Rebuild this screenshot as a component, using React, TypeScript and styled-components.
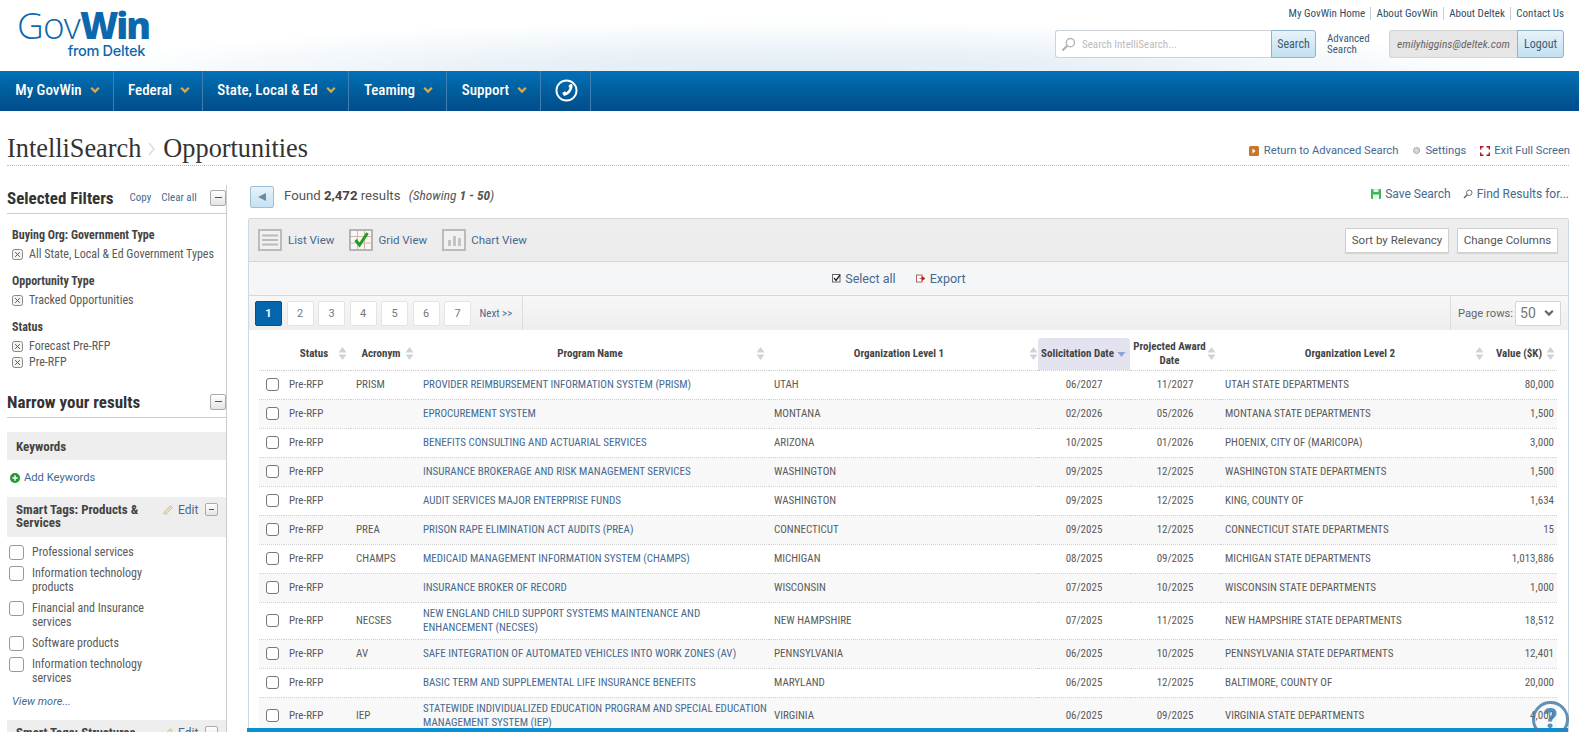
import React from "react";
import styled, { createGlobalStyle } from "styled-components";

const Global = createGlobalStyle`
  html, body { margin: 0; padding: 0; background: #fff; }
  body { font-family: Roboto, "Liberation Sans", sans-serif; color: #555; font-size: 12px; }
  #root { width: 1579px; height: 732px; overflow: hidden; position: relative; }
  * { box-sizing: border-box; }
`;

const narrow = `font-stretch: 75%;`;
const LINK = "#46698f";

/* ---------- header ---------- */
const Header = styled.header`
  height: 71px;
  display: flex;
  justify-content: space-between;
  background: radial-gradient(ellipse 760px 62px at 800px 82px, #dce9f3 0%, #eaf2f8 50%, #fff 100%);
`;
const Logo = styled.div`
  margin: 6px 0 0 17px;
  width: 128px;
  color: #0c67ad;
  font-family: "Open Sans", sans-serif;
  text-align: right;
  line-height: 1;
`;
const LogoMain = styled.div`
  font-size: 37px;
  letter-spacing: -0.8px;
  font-weight: 300;
  line-height: 38px;
  white-space: nowrap;
  b { font-weight: 800; letter-spacing: -2.2px; margin-right: 1px; }
`;
const LogoSub = styled.div`
  font-family: Inter, sans-serif;
  font-weight: 500;
  font-size: 14.5px;
  letter-spacing: -0.3px;
  line-height: 14px;
`;
const HeaderRight = styled.div`
  display: flex;
  flex-direction: column;
  align-items: flex-end;
  padding: 7px 15px 0 0;
`;
const TopLinks = styled.nav`
  display: flex;
  height: 13px;
  line-height: 13px;
  align-items: center;
  font-size: 11px;
  color: #2f4f68;
  ${narrow}
`;
const TopLink = styled.a`
  padding: 0 5.2px;
  border-left: 1px solid #c6ced6;
  &:first-child { border-left: 0; }
  &:last-child { padding-right: 0; }
`;
const SearchRow = styled.div`
  display: flex;
  align-items: stretch;
  height: 28px;
  margin-top: 10px;
`;
const SearchBox = styled.div`
  width: 216px;
  display: flex;
  align-items: center;
  gap: 6px;
  padding-left: 5px;
  background: #fff;
  border: 1px solid #cdd3d9;
  border-right: 0;
  border-radius: 3px 0 0 3px;
  color: #bbb;
  font-size: 11px;
  ${narrow}
`;
const LightBlueBtn = styled.button<{ $w: number }>`
  width: ${(p) => p.$w}px;
  padding: 0;
  background: linear-gradient(#e6f3fb, #c3e0f1);
  border: 1px solid #8fb4cc;
  border-radius: 0 3px 3px 0;
  color: #3c5a72;
  font-family: inherit;
  ${narrow}
  font-size: 12px;
`;
const AdvSearch = styled.div`
  width: 62px;
  margin-left: 11px;
  font-size: 11px;
  line-height: 11.5px;
  color: #3a5a78;
  ${narrow}
  align-self: center;
`;
const EmailBox = styled.div`
  width: 128px;
  display: flex;
  align-items: center;
  justify-content: center;
  background: #e6e6e6;
  border: 1px solid #d5d5d5;
  border-right: 0;
  border-radius: 3px 0 0 3px;
  font-size: 11.5px;
  font-style: italic;
  color: #666;
  ${narrow}
`;

/* ---------- nav ---------- */
const NavBar = styled.nav`
  height: 40px;
  display: flex;
  background: linear-gradient(#0270b8 0%, #01609f 45%, #024c8b 100%);
`;
const NavItem = styled.div<{ $w: number }>`
  width: ${(p) => p.$w}px;
  display: flex;
  align-items: center;
  justify-content: center;
  gap: 8px;
  border-right: 1px solid #3f80b4;
  color: #fff;
  font-size: 15px;
  font-weight: 500;
  ${narrow}
  padding: 0 0 2px 2px;
`;

/* ---------- title ---------- */
const TitleRow = styled.div`
  height: 55px;
  margin: 0 10px 0 7px;
  border-bottom: 1px dotted #bbb;
  display: flex;
  justify-content: space-between;
  align-items: flex-end;
`;
const Crumbs = styled.div`
  display: flex;
  align-items: center;
  font-family: "Liberation Serif", serif;
  font-size: 26.3px;
  line-height: 32px;
  color: #333;
  gap: 7px;
`;
const TitleActions = styled.div`
  display: flex;
  align-items: center;
  font-size: 11.2px;
  color: ${LINK};
  height: 24px;
  padding-bottom: 5px;
  margin-right: -1px;
`;
const ActionLink = styled.a<{ $ml?: number; $gap?: number }>`
  display: flex;
  align-items: center;
  gap: ${(p) => p.$gap ?? 5}px;
  margin-left: ${(p) => p.$ml ?? 0}px;
  color: ${LINK};
  white-space: nowrap;
`;

/* ---------- content ---------- */
const Content = styled.div`
  display: flex;
  padding: 19px 0 0 7px;
`;
const Sidebar = styled.aside`
  width: 220px;
  height: 560px;
  border-right: 1px solid #c9ccd0;
  flex: none;
`;
const SideHead = styled.div<{ $mt?: number }>`
  height: 29px;
  margin-top: ${(p) => p.$mt ?? 0}px;
  display: flex;
  align-items: center;
  border-bottom: 1px solid #ccc;
  padding-bottom: 3px;
  h2 {
    margin: 0;
    font-size: 17px;
    line-height: 20px;
    font-weight: 700;
    color: #333;
    ${narrow}
  }
`;
const SideTool = styled.a<{ $ml: number }>`
  margin-left: ${(p) => p.$ml}px;
  color: ${LINK};
  font-size: 11px;
  ${narrow}
`;
const Minus = styled.span<{ $size?: number }>`
  width: ${(p) => p.$size ?? 16}px;
  height: ${(p) => p.$size ?? 16}px;
  flex: none;
  margin-left: auto;
  border: 1px solid #aaa;
  border-radius: 2px;
  background: linear-gradient(#fff, #e4e4e4);
  position: relative;
  &::after {
    content: "";
    position: absolute;
    left: 25%;
    right: 25%;
    top: 50%;
    margin-top: -1px;
    height: 1px;
    background: #555;
  }
`;
const FilterGroup = styled.div`
  padding: 13px 0 0 5px;
`;
const FilterLabel = styled.div<{ $mt?: number }>`
  font-size: 12px;
  line-height: 16px;
  font-weight: 700;
  color: #444;
  ${narrow}
  margin: ${(p) => p.$mt ?? 0}px 0 3px;
`;
const Chip = styled.div`
  display: flex;
  align-items: center;
  gap: 6px;
  height: 16px;
  font-size: 12px;
  color: #5a5a5a;
  ${narrow}
  white-space: nowrap;
`;
const SectionBar = styled.div<{ $mt?: number }>`
  background: #eee;
  height: 28px;
  margin-top: ${(p) => p.$mt ?? 0}px;
  padding-left: 9px;
  display: flex;
  align-items: center;
  font-size: 13px;
  font-weight: 700;
  color: #444;
  ${narrow}
`;
const AddRow = styled.a`
  height: 37px;
  display: flex;
  align-items: center;
  gap: 4px;
  padding: 0 0 2px 3px;
  color: ${LINK};
  font-size: 11.2px;
`;
const TagHead = styled.div<{ $h: number }>`
  min-height: ${(p) => p.$h}px;
  background: #eee;
  padding: 6px 8px 0 9px;
  display: flex;
  align-items: flex-start;
  div.title {
    width: 135px;
    font-size: 13px;
    line-height: 13px;
    font-weight: 700;
    color: #444;
    ${narrow}
  }
`;
const EditLink = styled.span`
  display: flex;
  align-items: center;
  gap: 4px;
  margin-left: 12px;
  font-size: 12px;
  color: ${LINK};
  height: 13px;
`;
const TagList = styled.ul`
  list-style: none;
  margin: 8px 0 0;
  padding: 0 0 0 2px;
`;
const TagItem = styled.li`
  display: flex;
  gap: 8px;
  margin-bottom: 7px;
  font-size: 12px;
  line-height: 14px;
  color: #5a5a5a;
  ${narrow}
  span { width: 125px; }
`;
const Check = styled.span`
  display: block;
  flex: none;
  width: 15px !important;
  height: 15px;
  margin-bottom: -1px;
  border: 1px solid #999;
  border-radius: 3px;
  background: #fff;
`;
const ViewMore = styled.a`
  display: block;
  margin: 10px 0 11px 5px;
  font-size: 11px;
  line-height: 14px;
  font-style: italic;
  color: ${LINK};
`;

/* ---------- main ---------- */
const Main = styled.main`
  margin-left: 21px;
  width: 1321px;
  flex: none;
`;
const ResultHead = styled.div`
  height: 33px;
  padding: 0 0 0 2px;
  display: flex;
  align-items: flex-start;
`;
const BackBtn = styled.span`
  width: 24px;
  height: 22px;
  border: 1px solid #9fc0d6;
  border-radius: 2px;
  background: linear-gradient(#e6f3fb, #c6e1f1);
  display: flex;
  align-items: center;
  justify-content: center;
  margin-top: 1px;
`;
const Found = styled.div`
  margin-left: 10px;
  font-size: 13.2px;
  line-height: 22px;
  color: #555;
  b { color: #444; }
  em { margin-left: 5px; font-size: 13.4px; ${narrow} b { color: #555; } }
`;
const HeadActions = styled.div`
  margin-left: auto;
  display: flex;
  gap: 12px;
  color: ${LINK};
  font-size: 12px;
  height: 18px;
  align-items: center;
`;
const Panel = styled.section`
  height: 520px;
  border: 1px solid #cdd9e4;
  border-top: 0;
  border-radius: 3px 3px 0 0;
`;
const ViewBar = styled.div`
  height: 44px;
  background: linear-gradient(#eee, #ececec);
  border-bottom: 1px solid #d6d6d6;
  border-top: 1px solid #d6d6d6;
  display: flex;
  align-items: center;
  padding: 0 10px 0 9px;
`;
const ViewLink = styled.a<{ $ml?: number; $gap: number }>`
  display: flex;
  align-items: center;
  gap: ${(p) => p.$gap}px;
  margin-left: ${(p) => p.$ml ?? 0}px;
  color: ${LINK};
  font-size: 11.5px;
  white-space: nowrap;
`;
const WhiteBtn = styled.button<{ $w: number; $ml: string }>`
  width: ${(p) => p.$w}px;
  height: 25px;
  margin-left: ${(p) => p.$ml};
  background: #fff;
  border: 1px solid #d0d0d0;
  border-radius: 1px;
  box-shadow: 0 1px 1px rgba(0, 0, 0, 0.12);
  font-family: inherit;
  font-size: 11.5px;
  color: #555;
  padding: 0;
`;
const SelectRow = styled.div`
  height: 34px;
  background: #f5f6f7;
  border-bottom: 1px solid #d8d8d8;
  display: flex;
  align-items: center;
  justify-content: center;
  gap: 20px;
  font-size: 12.5px;
  color: ${LINK};
  padding-right: 19px;
  a { display: flex; align-items: center; gap: 4px; }
`;
const PagerRow = styled.div`
  height: 34px;
  background: linear-gradient(#f7f7f7, #eeeeee);
  display: flex;
  align-items: stretch;
`;
const Pages = styled.div`
  display: flex;
  align-items: center;
  gap: 4.5px;
  padding-left: 6px;
  width: 274px;
  border-right: 1px solid #ddd;
`;
const PageBtn = styled.span<{ $on?: boolean }>`
  width: 27px;
  height: 25px;
  display: flex;
  align-items: center;
  justify-content: center;
  border-radius: 2px;
  border: 1px solid ${(p) => (p.$on ? "#02508f" : "#e4e4e4")};
  background: ${(p) => (p.$on ? "#0566ad" : "#fff")};
  color: ${(p) => (p.$on ? "#fff" : "#777")};
  font-size: 11px;
  font-weight: ${(p) => (p.$on ? 700 : 400)};
`;
const NextLink = styled.a`
  margin-left: 4px;
  color: ${LINK};
  font-size: 11px;
  ${narrow}
  white-space: nowrap;
`;
const Rows = styled.div`
  margin-left: auto;
  width: 118px;
  border-left: 1px solid #ddd;
  display: flex;
  align-items: center;
  gap: 2px;
  padding-left: 7px;
  font-size: 11.2px;
  color: #666;
  white-space: nowrap;
`;
const RowSelect = styled.div`
  width: 46px;
  height: 25px;
  background: #fff;
  border: 1px solid #d4d4d4;
  border-radius: 2px;
  display: flex;
  align-items: center;
  justify-content: space-between;
  padding: 0 6px 0 4px;
  font-size: 14px;
  color: #777;
`;
const TableWrap = styled.div`
  padding: 0 11px 0 10px;
  background: #fff;
`;
const Table = styled.table`
  border-collapse: collapse;
  table-layout: fixed;
  width: 1298px;
`;
const Th = styled.th`
  height: 40px;
  padding: 0;
  border-bottom: 1px dotted #ccc;
  vertical-align: bottom;
  font-size: 11px;
  line-height: 13.5px;
  font-weight: 700;
  color: #444;
  ${narrow}
`;
const ThInner = styled.div<{ $active?: boolean; $pl?: number; $pr?: number }>`
  height: 32px;
  display: flex;
  align-items: center;
  border-radius: 3px 3px 0 0;
  background: ${(p) => (p.$active ? "#e3e3f0" : "transparent")};
  padding: 0 ${(p) => p.$pr ?? 4}px 0 ${(p) => p.$pl ?? 0}px;
  span.t { flex: 1; text-align: center; }
`;
const Tr = styled.tr<{ $alt: boolean; $h: number }>`
  height: ${(p) => p.$h}px;
  background: ${(p) => (p.$alt ? "#f8f8f8" : "#fff")};
`;
const Td = styled.td<{ $align?: string; $pl?: number; $pr?: number }>`
  padding: 0 ${(p) => p.$pr ?? 0}px 0 ${(p) => p.$pl ?? 5}px;
  border-bottom: 1px dotted #d0d0d0;
  font-size: 11px;
  line-height: 14px;
  text-align: ${(p) => p.$align ?? "left"};
  color: #5a5a5a;
  ${narrow}
`;
const RowCheck = styled.span`
  display: block;
  width: 13px;
  height: 13px;
  margin-left: 7px;
  border: 1px solid #777;
  border-radius: 3px;
  background: #fff;
`;
const ProgLink = styled.a`
  color: ${LINK};
`;
const BottomStrip = styled.div`
  position: absolute;
  left: 247px;
  right: 11px;
  bottom: 0;
  height: 4px;
  background: #0a90d2;
`;
const HelpBubble = styled.div`
  position: absolute;
  left: 1532px;
  top: 701px;
  width: 37px;
  height: 37px;
  border-radius: 50%;
  border: 3px solid rgba(70, 125, 170, 0.85);
  color: rgba(70, 125, 170, 0.9);
  font-size: 27px;
  font-weight: 900;
  line-height: 31px;
  text-align: center;
`;

/* ---------- icons ---------- */
const Chevron = ({ c = "#e0a94a" }: { c?: string }) => (
  <svg width="10" height="8" viewBox="0 0 10 8"><path d="M1.2 1.8 5 5.6l3.8-3.8" fill="none" stroke={c} strokeWidth="2.2" /></svg>
);
const PhoneIcon = () => (
  <svg width="23" height="23" viewBox="0 0 22 22">
    <circle cx="11" cy="11" r="9.6" fill="none" stroke="#fff" strokeWidth="1.8" />
    <path d="M13.7 5.6 15.4 4.8c.5-.2.9-.1 1.1.3.7 1.8.2 4.3-1.3 6.6-1.6 2.4-3.9 4-6 4.4-.5.1-.9-.1-1.1-.5l-.9-1.7c-.2-.4 0-.9.4-1.1l1.5-.8c.4-.2.8-.1 1 .2l.5.6c1.5-.8 3-2.9 3.4-4.6l-.7-.4c-.4-.2-.5-.7-.3-1.1l.7-1.1z" fill="#fff" />
  </svg>
);
const SearchIcon = ({ s = 15, c = "#b5b5b5" }: { s?: number; c?: string }) => (
  <svg width={s} height={s} viewBox="0 0 16 16"><circle cx="10" cy="6" r="4.4" fill="none" stroke={c} strokeWidth="1.5" /><path d="M6.8 9.2 1.6 14.4" stroke={c} strokeWidth="2.4" /></svg>
);
const ReturnIcon = () => (
  <svg width="10" height="10" viewBox="0 0 10 10"><rect width="10" height="10" rx="1.5" fill="#c9752a" /><path d="M3.5 2.5 6.5 5l-3 2.5z" fill="#fff" /></svg>
);
const GearIcon = () => (
  <svg width="9" height="9" viewBox="0 0 10 10"><circle cx="5" cy="5" r="3.3" fill="#ddd" stroke="#999" strokeWidth="1.2" strokeDasharray="1.4 .6" /><circle cx="5" cy="5" r="1.2" fill="#fff" stroke="#aaa" strokeWidth=".6" /></svg>
);
const ExitIcon = () => (
  <svg width="10" height="10" viewBox="0 0 10 10"><path d="M.7 3.5V.7h2.8M6.5.7h2.8v2.8M9.3 6.5v2.8H6.5M3.5 9.3H.7V6.5" fill="none" stroke="#a8181e" strokeWidth="1.4" /></svg>
);
const XBox = () => (
  <svg width="11" height="11" viewBox="0 0 11 11"><rect x=".5" y=".5" width="10" height="10" rx="2" fill="#f3f3f3" stroke="#888" /><path d="m3.2 3.2 4.6 4.6m0-4.6L3.2 7.8" stroke="#555" strokeWidth="1" /></svg>
);
const PlusIcon = () => (
  <svg width="10" height="10" viewBox="0 0 10 10"><circle cx="5" cy="5" r="5" fill="#1a9a2f" /><path d="M5 2.3v5.4M2.3 5h5.4" stroke="#fff" strokeWidth="1.5" /></svg>
);
const Pencil = () => (
  <svg width="11" height="11" viewBox="0 0 11 11"><path d="M1 8 7.5 1.5l2 2L3 10H1z" fill="#e9dcb0" stroke="#cdbb80" strokeWidth=".7" /><path d="M.5 10.6h6" stroke="#ddd" /></svg>
);
const SaveIcon = () => (
  <svg width="10" height="10" viewBox="0 0 10 10"><rect width="10" height="10" rx="1" fill="#3eb45b" /><rect x="2.5" y="0" width="5" height="3" fill="#d7f2dd" /><rect x="2" y="5.5" width="6" height="4.5" fill="#e9f8ec" /></svg>
);
const ListIcon = () => (
  <svg width="24" height="22" viewBox="0 0 24 22"><rect x="1" y="1" width="22" height="20" fill="#f1f1f1" stroke="#bbb" strokeWidth="2" /><path d="M4 6.5h16M4 11h16M4 15.5h16" stroke="#bbb" strokeWidth="2" /></svg>
);
const GridIcon = () => (
  <svg width="24" height="22" viewBox="0 0 24 22"><rect x="1" y="1" width="22" height="20" fill="#f7f7f7" stroke="#b5b5b5" strokeWidth="2" /><path d="M2 7.5h20M2 14h20M8.5 2v18M15.5 2v18" stroke="#d8b4a8" strokeWidth="1" /><path d="m6.5 11 4 5 8-12" fill="none" stroke="#1ea01e" strokeWidth="3" /></svg>
);
const ChartIcon = () => (
  <svg width="24" height="22" viewBox="0 0 24 22"><rect x="1" y="1" width="22" height="20" fill="#f1f1f1" stroke="#bbb" strokeWidth="2" /><path d="M6 11h3v6H6zM11 7h3v10h-3zM16 9h3v8h-3z" fill="#c4c4c4" /></svg>
);
const SelectIcon = () => (
  <svg width="9" height="9" viewBox="0 0 9 9"><rect x=".5" y=".5" width="7.5" height="7.5" fill="#fff" stroke="#666" /><path d="m2 4 2 2.5L8 1" fill="none" stroke="#222" strokeWidth="1.3" /></svg>
);
const ExportIcon = () => (
  <svg width="10" height="9" viewBox="0 0 10 9"><rect x=".5" y="1" width="5.5" height="7" fill="#fff" stroke="#a66" /><path d="M3.5 4.5h4M6 2.5l3 2-3 2z" fill="#b22" stroke="#b22" strokeWidth=".7" /></svg>
);
const SortIcon = ({ active }: { active?: boolean }) =>
  active ? (
    <svg width="9" height="12" viewBox="0 0 9 12"><path d="M.5 4h8l-4 5z" fill="#8aa5da" /></svg>
  ) : (
    <svg width="9" height="15" viewBox="0 0 9 15" style={{ flex: "none" }}><path d="M4.5 1 8.5 6.5h-8zM4.5 14 .5 8.5h8z" fill="#d0d3d6" /></svg>
  );

/* ---------- data ---------- */
const columns = [
  { w: 25, label: "" },
  { w: 67, label: "Status", pl: 6 },
  { w: 67, label: "Acronym", pl: 6 },
  { w: 351, label: "Program Name", pl: 6 },
  { w: 269, label: "Organization Level 1", pr: 0 },
  { w: 92, label: "Solicitation Date", active: true },
  { w: 90, label: "Projected Award Date", pl: 2, pr: 4 },
  { w: 268, label: "Organization Level 2", pl: 5, pr: 4 },
  { w: 69, label: "Value ($K)", pl: 4, pr: 2 },
];

const rows: [string, string, string, string, string, string, string][] = [
  ["PRISM", "PROVIDER REIMBURSEMENT INFORMATION SYSTEM (PRISM)", "UTAH", "06/2027", "11/2027", "UTAH STATE DEPARTMENTS", "80,000"],
  ["", "EPROCUREMENT SYSTEM", "MONTANA", "02/2026", "05/2026", "MONTANA STATE DEPARTMENTS", "1,500"],
  ["", "BENEFITS CONSULTING AND ACTUARIAL SERVICES", "ARIZONA", "10/2025", "01/2026", "PHOENIX, CITY OF (MARICOPA)", "3,000"],
  ["", "INSURANCE BROKERAGE AND RISK MANAGEMENT SERVICES", "WASHINGTON", "09/2025", "12/2025", "WASHINGTON STATE DEPARTMENTS", "1,500"],
  ["", "AUDIT SERVICES MAJOR ENTERPRISE FUNDS", "WASHINGTON", "09/2025", "12/2025", "KING, COUNTY OF", "1,634"],
  ["PREA", "PRISON RAPE ELIMINATION ACT AUDITS (PREA)", "CONNECTICUT", "09/2025", "12/2025", "CONNECTICUT STATE DEPARTMENTS", "15"],
  ["CHAMPS", "MEDICAID MANAGEMENT INFORMATION SYSTEM (CHAMPS)", "MICHIGAN", "08/2025", "09/2025", "MICHIGAN STATE DEPARTMENTS", "1,013,886"],
  ["", "INSURANCE BROKER OF RECORD", "WISCONSIN", "07/2025", "10/2025", "WISCONSIN STATE DEPARTMENTS", "1,000"],
  ["NECSES", "NEW ENGLAND CHILD SUPPORT SYSTEMS MAINTENANCE AND ENHANCEMENT (NECSES)", "NEW HAMPSHIRE", "07/2025", "11/2025", "NEW HAMPSHIRE STATE DEPARTMENTS", "18,512"],
  ["AV", "SAFE INTEGRATION OF AUTOMATED VEHICLES INTO WORK ZONES (AV)", "PENNSYLVANIA", "06/2025", "10/2025", "PENNSYLVANIA STATE DEPARTMENTS", "12,401"],
  ["", "BASIC TERM AND SUPPLEMENTAL LIFE INSURANCE BENEFITS", "MARYLAND", "06/2025", "12/2025", "BALTIMORE, COUNTY OF", "20,000"],
  ["IEP", "STATEWIDE INDIVIDUALIZED EDUCATION PROGRAM AND SPECIAL EDUCATION MANAGEMENT SYSTEM (IEP)", "VIRGINIA", "06/2025", "09/2025", "VIRGINIA STATE DEPARTMENTS", "4,000"],
];

const navItems = [
  { w: 114, t: "My GovWin" },
  { w: 89, t: "Federal" },
  { w: 146, t: "State, Local & Ed" },
  { w: 98, t: "Teaming" },
  { w: 94, t: "Support" },
];

const tags = ["Professional services", "Information technology products", "Financial and Insurance services", "Software products", "Information technology services"];

export default function App() {
  return (
    <>
      <Global />
      <Header>
        <Logo>
          <LogoMain>Gov<b>Win</b></LogoMain>
          <LogoSub>from Deltek</LogoSub>
        </Logo>
        <HeaderRight>
          <TopLinks>
            <TopLink>My GovWin Home</TopLink>
            <TopLink>About GovWin</TopLink>
            <TopLink>About Deltek</TopLink>
            <TopLink>Contact Us</TopLink>
          </TopLinks>
          <SearchRow>
            <SearchBox><SearchIcon />Search IntelliSearch...</SearchBox>
            <LightBlueBtn $w={45}>Search</LightBlueBtn>
            <AdvSearch>Advanced Search</AdvSearch>
            <EmailBox>emilyhiggins@deltek.com</EmailBox>
            <LightBlueBtn $w={47}>Logout</LightBlueBtn>
          </SearchRow>
        </HeaderRight>
      </Header>
      <NavBar>
        {navItems.map((n) => (
          <NavItem key={n.t} $w={n.w}>{n.t}<Chevron /></NavItem>
        ))}
        <NavItem $w={50}><PhoneIcon /></NavItem>
      </NavBar>
      <TitleRow>
        <Crumbs>
          IntelliSearch
          <svg width="8" height="16" viewBox="0 0 8 16"><path d="m1 2 5 6-5 6" fill="none" stroke="#ddd" strokeWidth="1.5" /></svg>
          Opportunities
        </Crumbs>
        <TitleActions>
          <ActionLink $gap={5}><ReturnIcon />Return to Advanced Search</ActionLink>
          <ActionLink $ml={14} $gap={4}><GearIcon />Settings</ActionLink>
          <ActionLink $ml={14} $gap={4}><ExitIcon />Exit Full Screen</ActionLink>
        </TitleActions>
      </TitleRow>
      <Content>
        <Sidebar>
          <SideHead>
            <h2>Selected Filters</h2>
            <SideTool $ml={16}>Copy</SideTool>
            <SideTool $ml={10}>Clear all</SideTool>
            <Minus />
          </SideHead>
          <FilterGroup>
            <FilterLabel>Buying Org: Government Type</FilterLabel>
            <Chip><XBox />All State, Local &amp; Ed Government Types</Chip>
            <FilterLabel $mt={11}>Opportunity Type</FilterLabel>
            <Chip><XBox />Tracked Opportunities</Chip>
            <FilterLabel $mt={11}>Status</FilterLabel>
            <Chip><XBox />Forecast Pre-RFP</Chip>
            <Chip><XBox />Pre-RFP</Chip>
          </FilterGroup>
          <SideHead $mt={19}>
            <h2>Narrow your results</h2>
            <Minus />
          </SideHead>
          <SectionBar $mt={14}>Keywords</SectionBar>
          <AddRow><PlusIcon />Add Keywords</AddRow>
          <TagHead $h={40}>
            <div className="title">Smart Tags: Products &amp; Services</div>
            <EditLink><Pencil />Edit</EditLink>
            <Minus $size={13} />
          </TagHead>
          <TagList>
            {tags.map((t, i) => (
              <TagItem key={i}><Check /><span>{t}</span></TagItem>
            ))}
          </TagList>
          <ViewMore>View more...</ViewMore>
          <TagHead $h={40}>
            <div className="title">Smart Tags: Structures</div>
            <EditLink><Pencil />Edit</EditLink>
            <Minus $size={13} />
          </TagHead>
        </Sidebar>
        <Main>
          <ResultHead>
            <BackBtn><svg width="10" height="10" viewBox="0 0 10 10"><path d="M9 1v8L1 5z" fill="#6a8ba5" /></svg></BackBtn>
            <Found>Found <b>2,472</b> results <em>(Showing <b>1 - 50</b>)</em></Found>
            <HeadActions>
              <ActionLink $gap={4}><SaveIcon />Save Search</ActionLink>
              <ActionLink $gap={4}><SearchIcon s={10} c="#666" />Find Results for...</ActionLink>
            </HeadActions>
          </ResultHead>
          <Panel>
            <ViewBar>
              <ViewLink $gap={6}><ListIcon />List View</ViewLink>
              <ViewLink $ml={15} $gap={5}><GridIcon />Grid View</ViewLink>
              <ViewLink $ml={15} $gap={5}><ChartIcon />Chart View</ViewLink>
              <WhiteBtn $w={104} $ml="auto">Sort by Relevancy</WhiteBtn>
              <WhiteBtn $w={101} $ml="8px">Change Columns</WhiteBtn>
            </ViewBar>
            <SelectRow>
              <a><SelectIcon />Select all</a>
              <a><ExportIcon />Export</a>
            </SelectRow>
            <PagerRow>
              <Pages>
                {[1, 2, 3, 4, 5, 6, 7].map((n) => (
                  <PageBtn key={n} $on={n === 1}>{n}</PageBtn>
                ))}
                <NextLink>Next &gt;&gt;</NextLink>
              </Pages>
              <Rows>Page rows:
                <RowSelect>50<Chevron c="#666" /></RowSelect>
              </Rows>
            </PagerRow>
            <TableWrap>
              <Table>
                <colgroup>
                  {columns.map((c, i) => <col key={i} width={c.w} />)}
                </colgroup>
                <thead>
                  <tr>
                    {columns.map((c, i) => (
                      <Th key={i}>
                        {c.label && (
                          <ThInner $active={c.active} $pl={c.pl} $pr={c.pr}>
                            <span className="t">{c.label}</span>
                            <SortIcon active={c.active} />
                          </ThInner>
                        )}
                      </Th>
                    ))}
                  </tr>
                </thead>
                <tbody>
                  {rows.map((r, i) => (
                    <Tr key={i} $alt={i % 2 === 1} $h={r[1].length > 62 ? 37 : 29}>
                      <Td $pl={0}><RowCheck /></Td>
                      <Td>Pre-RFP</Td>
                      <Td>{r[0]}</Td>
                      <Td><ProgLink>{r[1]}</ProgLink></Td>
                      <Td>{r[2]}</Td>
                      <Td $align="center" $pl={0}>{r[3]}</Td>
                      <Td $align="center" $pl={0}>{r[4]}</Td>
                      <Td>{r[5]}</Td>
                      <Td $align="right" $pl={0} $pr={3}>{r[6]}</Td>
                    </Tr>
                  ))}
                </tbody>
              </Table>
            </TableWrap>
          </Panel>
        </Main>
      </Content>
      <BottomStrip />
      <HelpBubble>?</HelpBubble>
    </>
  );
}
